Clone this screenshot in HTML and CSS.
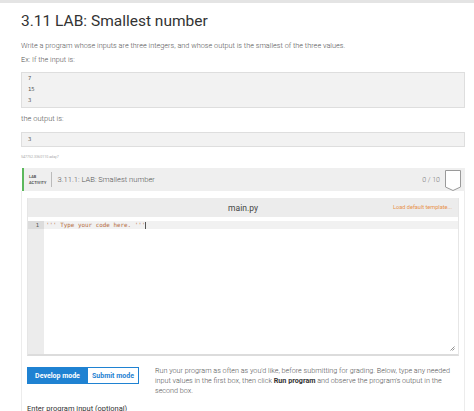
FILE: index.html
```html
<!DOCTYPE html>
<html>
<head>
<meta charset="utf-8">
<link rel="stylesheet" href="styles.css">
</head>
<body>
<div class="topband"></div>
<main class="page">
  <h1 class="title">3.11 LAB: Smallest number</h1>
  <p class="text">Write a program whose inputs are three integers, and whose output is the smallest of the three values.</p>
  <p class="text ex">Ex: If the input is:</p>
  <pre class="codebox">7
15
3</pre>
  <p class="text out">the output is:</p>
  <pre class="codebox small">3</pre>
  <div class="tiny">547752.3360110.aday7</div>

  <section class="lab">
    <header class="lab-head">
      <div class="lab-tag">LAB<br>ACTIVITY</div>
      <div class="lab-title">3.11.1: LAB: Smallest number</div>
      <div class="lab-score">0 / 10</div>
      <svg class="badge" width="16" height="21" viewBox="0 0 16 21"><path d="M0.5 0.5 H15.5 V17 L8 20.5 L0.5 17 Z" fill="#fff" stroke="#9a9a9a" stroke-width="1"/></svg>
    </header>
    <div class="lab-body">
      <div class="editor">
        <div class="ed-head">
          <span class="ed-file">main.py</span>
          <span class="ed-load">Load default template...</span>
        </div>
        <div class="ed-body">
          <div class="gutter"><div class="ln active">1</div></div>
          <div class="lines">
            <div class="line active">''' Type your code here. '''<span class="cursor"></span></div>
          </div>
          <svg class="grip" width="5" height="5" viewBox="0 0 5 5"><path d="M4.5 0.5 L0.5 4.5 M4.5 2.5 L2.5 4.5" stroke="#777" stroke-width="0.8"/></svg>
        </div>
      </div>
      <div class="modes">
        <div class="btns">
          <span class="btn on">Develop mode</span><span class="btn off">Submit mode</span>
        </div>
        <p class="mode-text">Run your program as often as you'd like, before submitting for grading. Below, type any needed input values in the first box, then click <b>Run program</b> and observe the program's output in the second box.</p>
      </div>
      <div class="enter">Enter program input (optional)</div>
    </div>
  </section>
</main>
</body>
</html>
```
FILE: styles.css
```css
* { box-sizing: border-box; }
html, body { margin: 0; padding: 0; background: #fff; }
body { font-family: Roboto, "Noto Sans", sans-serif; color: #333; overflow: hidden; }
.topband { height: 3px; background: #e4e4e4; }
.page { padding: 9px 9px 0 21px; }
.title { margin: 0; font-size: 15.5px; line-height: 18px; font-weight: 400; color: #333; }
.text { margin: 11px 0 0; font-size: 7.3px; line-height: 10px; font-weight: 300; color: #555; }
.text.ex { margin-top: 4px; }
.text.out { margin-top: 6px; font-size: 7.5px; }
.codebox {
  margin: 7px 0 0; padding: 0 6px 1px; border: 1px solid #dedede; background: #f2f2f2;
  font-family: "DejaVu Sans Mono", monospace; font-size: 5.5px; line-height: 11px; color: #555;
}
.codebox.small { margin-top: 8px; padding-top: 1px; }
.tiny { margin-top: 7px; font-size: 3.6px; line-height: 6px; color: #aaa; }
.lab { margin-top: 8px; width: 444px; }
.lab-head {
  display: flex; align-items: center; height: 23px; background: #efefef;
  border-left: 2px solid #5cb85c; margin-left: 1px; padding-left: 5px; padding-right: 4px;
}
.lab-tag { font-size: 3.8px; line-height: 6px; font-weight: 700; color: #555; letter-spacing: 0.1px; padding-right: 5px; border-right: 1px solid #bbb; height: 15px; display: flex; align-items: center; }
.lab-title { margin-left: 5px; font-size: 7.6px; font-weight: 300; color: #555; flex: 1; }
.lab-score { font-size: 7px; color: #777; font-weight: 300; margin-right: 5px; }
.badge { display: block; margin-top: 1px; }
.lab-body { border-left: 1px solid #ececec; border-right: 1px solid #ececec; padding: 7px 5px 0; }
.editor { border: 1px solid #e6e6e6; border-top: none; border-bottom: 2px solid #dcdcdc; }
.ed-head { position: relative; height: 19px; background: #ececec; display: flex; align-items: center; justify-content: center; }
.ed-file { font-size: 8.5px; color: #444; }
.ed-load { position: absolute; right: 6px; top: 6px; font-size: 5.6px; color: #e8914b; }
.ed-body { position: relative; display: flex; height: 137px; padding-top: 4px; background: #fff; }
.gutter { width: 16px; background: #ececec; }
.ln { font-family: "DejaVu Sans Mono", monospace; font-size: 5.5px; line-height: 8px; text-align: right; padding-right: 5px; color: #555; }
.ln.active { background: #dcdcdc; }
.lines { flex: 1; }
.line { font-family: "DejaVu Sans Mono", monospace; font-size: 5.9px; line-height: 8px; padding-left: 2px; color: #b56d3e; white-space: pre; }
.line.active { background: #f1f1f1; }
.cursor { display: inline-block; width: 0; height: 7px; border-left: 1px solid #555; vertical-align: middle; }
.grip { position: absolute; right: 3px; bottom: 3px; }
.modes { display: flex; align-items: flex-start; margin-top: 11px; }
.btns { display: flex; height: 17px; margin-top: 0; }
.btn { display: flex; align-items: center; justify-content: center; font-size: 7px; font-weight: 700; height: 17px; }
.btn.on { width: 61px; background: #1f82d2; color: #fff; border: 1px solid #1f82d2; }
.btn.off { width: 51px; color: #1f82d2; background: #fff; border: 1px solid #1f82d2; border-left: none; }
.mode-text { margin: -1px 0 0 16px; font-size: 7.2px; line-height: 10px; font-weight: 300; color: #555; width: 302px; }
.mode-text b { font-weight: 700; color: #333; }
.enter { margin-top: 8px; font-size: 7.5px; line-height: 10px; color: #333; }
```
